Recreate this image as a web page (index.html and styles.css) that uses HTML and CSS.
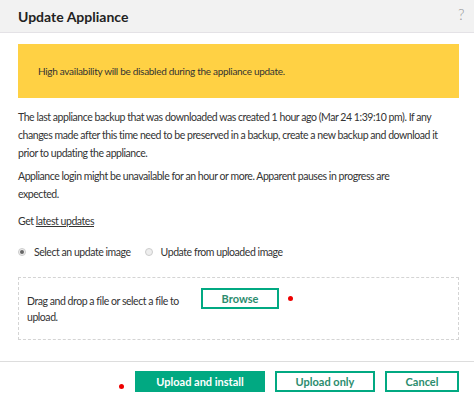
FILE: index.html
```html
<!DOCTYPE html>
<html lang="en">
<head>
    <meta charset="UTF-8">
    <title>Update Appliance</title>
    <link rel="stylesheet" href="styles.css">
</head>
<body>
    <div class="dialog">
        <div class="header">
            <h1>Update Appliance</h1>
            <span class="help">?</span>
        </div>

        <div class="content">
            <div class="notice">High availability will be disabled during the appliance update.</div>

            <p class="backup">The last appliance backup that was downloaded was created 1 hour ago (Mar 24 1:39:10 pm). If any changes made after this time need to be preserved in a backup, create a new backup and download it prior to updating the appliance.</p>

            <p>Appliance login might be unavailable for an hour or more. Apparent pauses in progress are expected.</p>

            <p class="get">Get <a href="#">latest updates</a></p>

            <div class="radios">
                <label class="radio"><span class="dot checked"></span>Select an update image</label>
                <label class="radio"><span class="dot"></span>Update from uploaded image</label>
            </div>

            <div class="dropzone">
                <div class="drop-text">Drag and drop a file or select a file to upload.</div>
                <button class="btn btn-outline btn-browse">Browse</button>
                <span class="required"></span>
            </div>
        </div>

        <div class="footer">
            <span class="required"></span>
            <button class="btn btn-primary btn-install">Upload and install</button>
            <button class="btn btn-outline btn-upload">Upload only</button>
            <button class="btn btn-outline btn-cancel">Cancel</button>
        </div>
    </div>
</body>
</html>
```

FILE: styles.css
```css
body {
    margin: 0;
    font-family: Lato, "Open Sans", sans-serif;
    font-size: 10.5px;
    letter-spacing: -0.45px;
    color: #333;
    background-color: white;
}
.dialog {
    width: 474px;
    height: 397px;
    overflow: hidden;
}
.header {
    height: 32px;
    background-color: #f2f2f2;
    border-bottom: 1px solid #e4e2e6;
    padding: 0 10px 0 18px;
    display: flex;
    align-items: center;
    justify-content: space-between;
}
.header h1 {
    margin: 0;
    font-size: 14px;
    font-weight: 700;
    letter-spacing: 0;
    color: #222;
}
.help {
    font-size: 15px;
    font-weight: 300;
    color: #999;
    margin-top: -4px;
}
.content {
    padding: 11px 15px 0 18px;
}
.notice {
    background-color: #ffd144;
    height: 54px;
    padding-left: 20px;
    display: flex;
    align-items: center;
    font-size: 10px;
    letter-spacing: -0.3px;
    color: #333;
}
p {
    margin: 5px 0 0;
    line-height: 18px;
    max-width: 400px;
}
.backup {
    margin-top: 10px;
    max-width: 422px;
}
.get {
    margin-top: 9px;
}
a {
    color: #333;
}
.radios {
    display: flex;
    gap: 14px;
    margin-top: 16px;
}
.radio {
    display: flex;
    align-items: center;
    gap: 8px;
}
.dot {
    width: 6px;
    height: 6px;
    border: 1px solid #ccc;
    border-radius: 50%;
    background-color: #eee;
    position: relative;
}
.dot.checked::after {
    content: "";
    position: absolute;
    left: 1px;
    top: 1px;
    width: 4px;
    height: 4px;
    border-radius: 50%;
    background-color: #666;
}
.dropzone {
    margin-top: 19px;
    height: 61px;
    border: 1px dashed #d4d4d4;
    padding: 0 8px;
    display: flex;
    align-items: flex-start;
}
.drop-text {
    width: 160px;
    margin-top: 15px;
    line-height: 16px;
}
.btn {
    font-family: Lato, "Open Sans", sans-serif;
    font-weight: 700;
    font-size: 11px;
    letter-spacing: 0;
    height: 21px;
    padding: 0;
    cursor: pointer;
}
.btn-outline {
    background-color: white;
    border: 2px solid #01a982;
    color: #2c8c6d;
}
.btn-primary {
    background-color: #01a982;
    border: none;
    color: white;
}
.btn-browse {
    width: 78px;
    margin: 10px 0 0 14px;
}
.required {
    width: 5px;
    height: 5px;
    border-radius: 50%;
    background-color: #e00;
}
.dropzone .required {
    margin: 18px 0 0 9px;
}
.footer {
    margin-top: 21px;
    border-top: 1px solid #ddd;
    padding: 9px 15px 0 0;
    display: flex;
    justify-content: flex-end;
    align-items: flex-start;
    gap: 10px;
}
.footer .required {
    margin: 13px 1px 0 0;
}
.btn-install {
    width: 130px;
}
.btn-upload {
    width: 100px;
}
.btn-cancel {
    width: 74px;
}
```
